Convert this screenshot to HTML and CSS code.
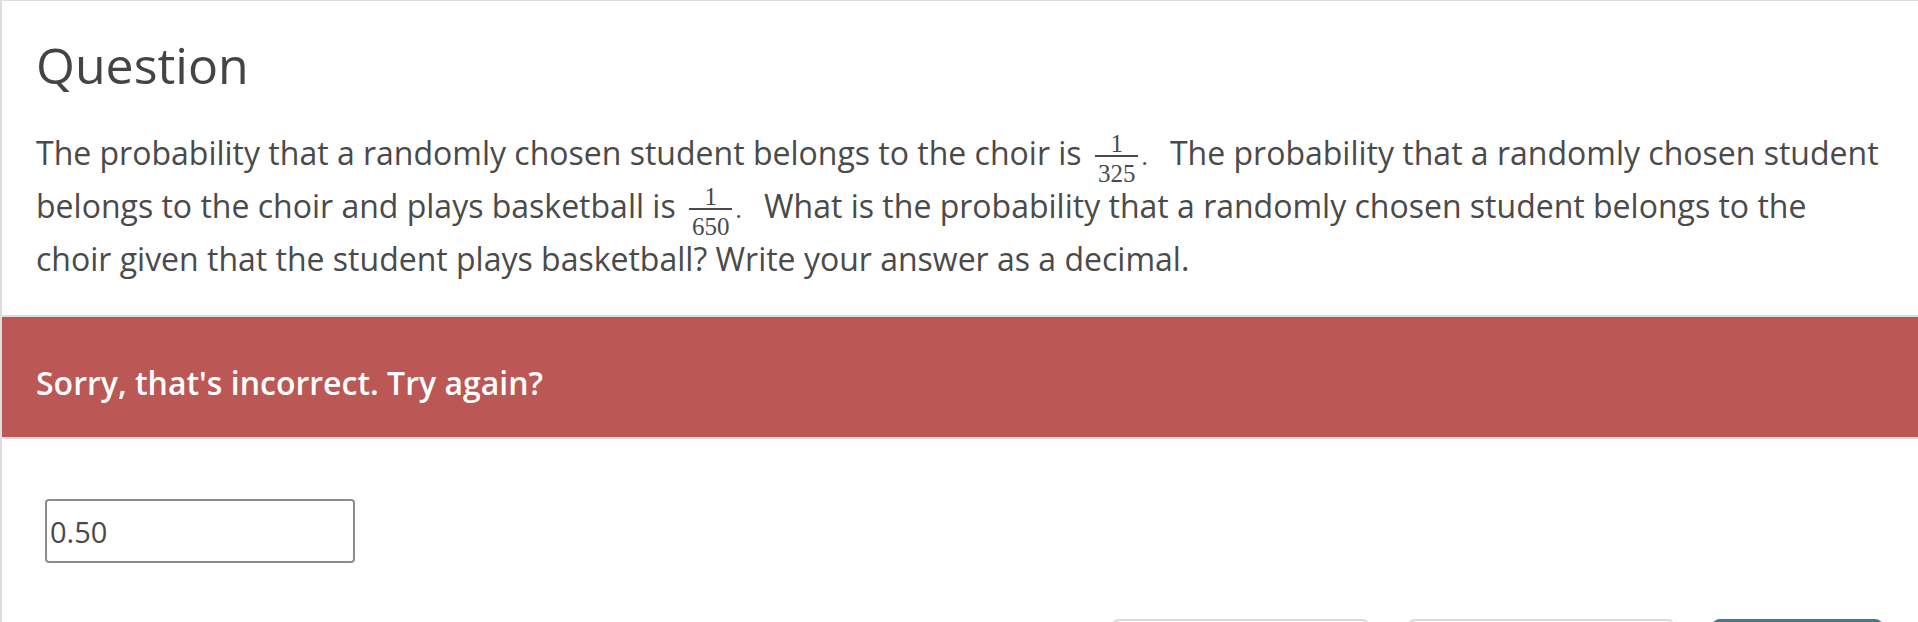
FILE: index.html
```html
<!DOCTYPE html>
<html lang="en">
<head>
  <meta charset="UTF-8">
  <meta name="viewport" content="width=device-width, initial-scale=1.0">
  <title>Question</title>
  <link rel="stylesheet" href="styles.css">
</head>
<body>
  <div class="question-card">
    <div class="question-body">
      <h1>Question</h1>
      <p class="prompt">
        The probability that a randomly chosen student belongs to the choir is
        <span class="math"><span class="frac"><span class="num">1</span><span class="den">325</span></span><span class="dot">.</span></span>
        The probability that a randomly chosen student belongs to the choir and plays basketball is
        <span class="math"><span class="frac"><span class="num">1</span><span class="den">650</span></span><span class="dot">.</span></span>
        What is the probability that a randomly chosen student belongs to the choir given that the student plays basketball? Write your answer as a decimal.
      </p>
    </div>

    <div class="feedback incorrect">Sorry, that's incorrect. Try again?</div>

    <div class="answer-area">
      <input type="text" class="answer-input" value="0.50">
    </div>

    <div class="actions">
      <button type="button" class="btn btn-outline wide"></button>
      <button type="button" class="btn btn-outline wider"></button>
      <button type="button" class="btn btn-primary"></button>
    </div>
  </div>
</body>
</html>
```

FILE: styles.css
```css
body {
  margin: 0;
  padding: 0;
  background-color: #ffffff;
  font-family: "Open Sans", Arial, sans-serif;
  color: #4a4a4a;
}

.question-card {
  border-left: 2px solid #dedede;
  border-top: 1px solid #dedede;
  min-height: 700px;
}

.question-body {
  padding: 34px 34px 30px 34px;
}

h1 {
  margin: 0;
  font-size: 50px;
  font-weight: 400;
  line-height: 60px;
  color: #444444;
}

.prompt {
  margin: 31px 0 0 0;
  font-size: 32px;
  line-height: 53px;
}

.math {
  margin: 0 14px 0 5px;
  font-family: "Liberation Serif", "Times New Roman", serif;
  font-size: 25px;
  line-height: 20px;
}

.frac {
  display: inline-flex;
  flex-direction: column;
  align-items: center;
  vertical-align: 13px;
  margin-bottom: -14px;
}

.frac .num {
  align-self: stretch;
  text-align: center;
  line-height: 22px;
  border-bottom: 2px solid #4a4a4a;
}

.frac .den {
  line-height: 22px;
  padding: 6px 3px 0 3px;
}

.dot {
  margin-left: 3px;
}

.feedback {
  border-top: 2px solid #dcdcdc;
  border-bottom: 2px solid #dcdcdc;
  box-sizing: border-box;
  height: 124px;
  padding: 44px 34px 0 34px;
  font-size: 32px;
  font-weight: 600;
  line-height: 43px;
}

.incorrect {
  background-color: #bb5755;
  color: #ffffff;
}

.answer-area {
  padding: 60px 0 0 43px;
}

.answer-input {
  display: block;
  box-sizing: border-box;
  width: 310px;
  height: 64px;
  margin: 0;
  padding: 0 3px;
  border: 2px solid #8c8c8c;
  border-radius: 4px;
  font-family: "Open Sans", Arial, sans-serif;
  font-size: 29px;
  color: #4a4a4a;
}

.actions {
  display: flex;
  justify-content: flex-end;
  gap: 37px;
  padding: 56px 35px 0 0;
}

.btn {
  height: 52px;
  border-radius: 8px;
  cursor: pointer;
}

.btn-outline {
  background-color: #ffffff;
  border: 2px solid #dadada;
}

.wide {
  width: 259px;
}

.wider {
  width: 268px;
}

.btn-primary {
  width: 171px;
  background-color: #3a7d87;
  border: none;
}
```
